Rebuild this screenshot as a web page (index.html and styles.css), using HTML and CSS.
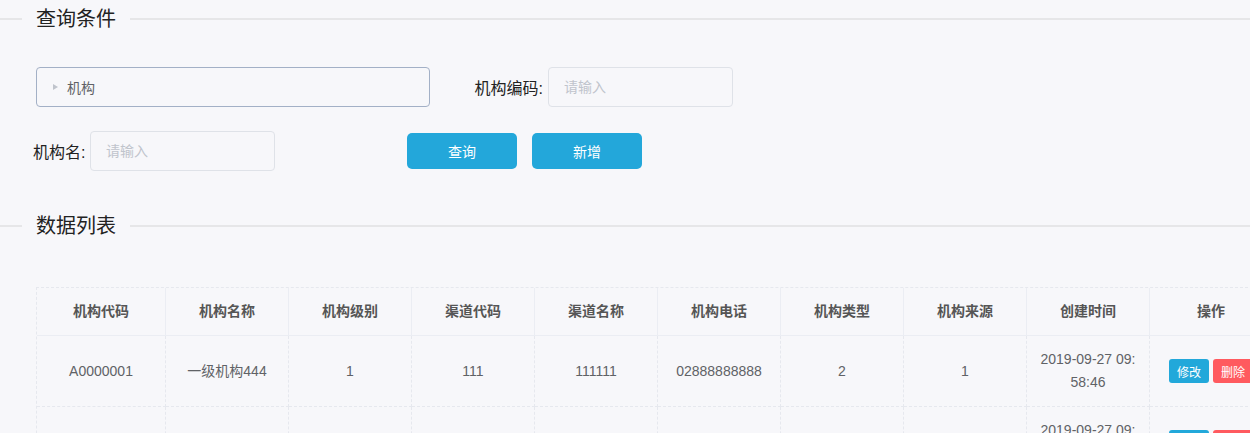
FILE: index.html
```html
<!DOCTYPE html>
<html lang="zh-CN">
<head>
    <meta charset="UTF-8">
    <title>机构管理</title>
    <link rel="stylesheet" href="styles.css">
</head>
<body>
    <div class="section-title"><span>查询条件</span></div>

    <div class="search-form">
        <div class="form-row row-one">
            <div class="tree-select">
                <span class="caret"></span>
                <span class="tree-text">机构</span>
            </div>
            <label class="form-label label-code">机构编码:</label>
            <input class="form-input" type="text" placeholder="请输入">
        </div>
        <div class="form-row row-two">
            <label class="form-label label-name">机构名:</label>
            <input class="form-input" type="text" placeholder="请输入">
            <div class="btn-group">
                <button class="btn">查询</button>
                <button class="btn">新增</button>
            </div>
        </div>
    </div>

    <div class="section-title list-title"><span>数据列表</span></div>

    <div class="table-wrap">
        <table class="data-table">
            <colgroup>
                <col style="width:129px">
                <col style="width:123px"><col style="width:123px"><col style="width:123px">
                <col style="width:123px"><col style="width:123px"><col style="width:123px">
                <col style="width:123px"><col style="width:123px"><col style="width:123px">
            </colgroup>
            <thead>
                <tr>
                    <th><div class="cell">机构代码</div></th>
                    <th><div class="cell">机构名称</div></th>
                    <th><div class="cell">机构级别</div></th>
                    <th><div class="cell">渠道代码</div></th>
                    <th><div class="cell">渠道名称</div></th>
                    <th><div class="cell">机构电话</div></th>
                    <th><div class="cell">机构类型</div></th>
                    <th><div class="cell">机构来源</div></th>
                    <th><div class="cell">创建时间</div></th>
                    <th><div class="cell">操作</div></th>
                </tr>
            </thead>
            <tbody>
                <tr>
                    <td><div class="cell">A0000001</div></td>
                    <td><div class="cell">一级机构444</div></td>
                    <td><div class="cell">1</div></td>
                    <td><div class="cell">111</div></td>
                    <td><div class="cell">111111</div></td>
                    <td><div class="cell">02888888888</div></td>
                    <td><div class="cell">2</div></td>
                    <td><div class="cell">1</div></td>
                    <td><div class="cell">2019-09-27 09:58:46</div></td>
                    <td><div class="cell ops"><button class="mini-btn edit">修改</button><button class="mini-btn del">删除</button></div></td>
                </tr>
                <tr>
                    <td><div class="cell">A0000002</div></td>
                    <td><div class="cell">二级机构</div></td>
                    <td><div class="cell">2</div></td>
                    <td><div class="cell">111</div></td>
                    <td><div class="cell">111111</div></td>
                    <td><div class="cell">02888888888</div></td>
                    <td><div class="cell">2</div></td>
                    <td><div class="cell">1</div></td>
                    <td><div class="cell">2019-09-27 09:58:46</div></td>
                    <td><div class="cell ops"><button class="mini-btn edit">修改</button><button class="mini-btn del">删除</button></div></td>
                </tr>
            </tbody>
        </table>
    </div>
</body>
</html>
```

FILE: styles.css
```css
body {
    margin: 0;
    background-color: #f7f7fa;
    font-family: "Liberation Sans", "Noto Sans CJK SC", sans-serif;
    color: #333;
    overflow: hidden;
}
.section-title {
    display: flex;
    align-items: center;
    height: 38px;
    font-size: 20px;
    color: #222;
}
.section-title::before {
    content: "";
    width: 22px;
    height: 2px;
    background-color: #e6e6e8;
}
.section-title::after {
    content: "";
    flex: 1;
    height: 2px;
    background-color: #e6e6e8;
}
.section-title span {
    margin: 0 14px;
    line-height: 38px;
}
.search-form {
    margin-top: 29px;
}
.form-row {
    display: flex;
    align-items: center;
    height: 40px;
}
.row-one {
    padding-left: 36px;
}
.row-two {
    margin-top: 24px;
    padding-left: 33px;
}
.tree-select {
    box-sizing: border-box;
    width: 394px;
    height: 40px;
    border: 1px solid #a3b0c6;
    border-radius: 4px;
    display: flex;
    align-items: center;
    padding-left: 16px;
    font-size: 14px;
    color: #606266;
}
.caret {
    width: 0;
    height: 0;
    border-left: 5px solid #c0c4cc;
    border-top: 3.5px solid transparent;
    border-bottom: 3.5px solid transparent;
    margin-right: 9px;
}
.form-label {
    font-size: 16px;
    color: #222;
}
.label-code {
    width: 113px;
    text-align: right;
    margin-right: 5px;
}
.label-name {
    width: 53px;
    margin-right: 4px;
}
.form-input {
    box-sizing: border-box;
    width: 185px;
    height: 40px;
    border: 1px solid #dfe2e8;
    border-radius: 4px;
    background-color: #f7f7fa;
    padding: 0 15px;
    font-size: 14px;
    font-family: inherit;
    outline: none;
}
.form-input::placeholder {
    color: #c0c4cc;
}
.btn-group {
    display: flex;
    gap: 15px;
    margin-left: 132px;
}
.btn {
    width: 110px;
    height: 36px;
    border: none;
    border-radius: 5px;
    background-color: #23a7da;
    color: #fff;
    font-size: 14px;
    font-family: inherit;
    cursor: pointer;
}
.list-title {
    margin-top: 36px;
}
.table-wrap {
    margin-top: 42px;
    padding-left: 36px;
    overflow: hidden;
}
.data-table {
    table-layout: fixed;
    width: 1236px;
    border-collapse: separate;
    border-spacing: 0;
    border-top: 1px dashed #e6e8ee;
    border-left: 1px dashed #e6e8ee;
}
.data-table th,
.data-table td {
    padding: 12px 0;
    text-align: center;
    font-size: 14px;
}
.data-table th {
    color: #555;
    font-weight: bold;
    border-right: 1px solid #ebedf3;
    border-bottom: 1px solid #ebedf3;
}
.data-table td {
    color: #606266;
    border-right: 1px dashed #e6e8ee;
    border-bottom: 1px dashed #e6e8ee;
}
.cell {
    padding: 0 10px;
    line-height: 23px;
    word-break: break-all;
}
.ops {
    display: flex;
    justify-content: center;
    gap: 4px;
    padding: 0 10px 0 19px;
    justify-content: flex-start;
}
.mini-btn {
    width: 40px;
    height: 24px;
    padding: 0;
    border: none;
    border-radius: 3px;
    color: #fff;
    font-size: 12px;
    font-family: inherit;
    flex-shrink: 0;
}
.edit {
    background-color: #22a8da;
}
.del {
    background-color: #ff5a5f;
}
```
